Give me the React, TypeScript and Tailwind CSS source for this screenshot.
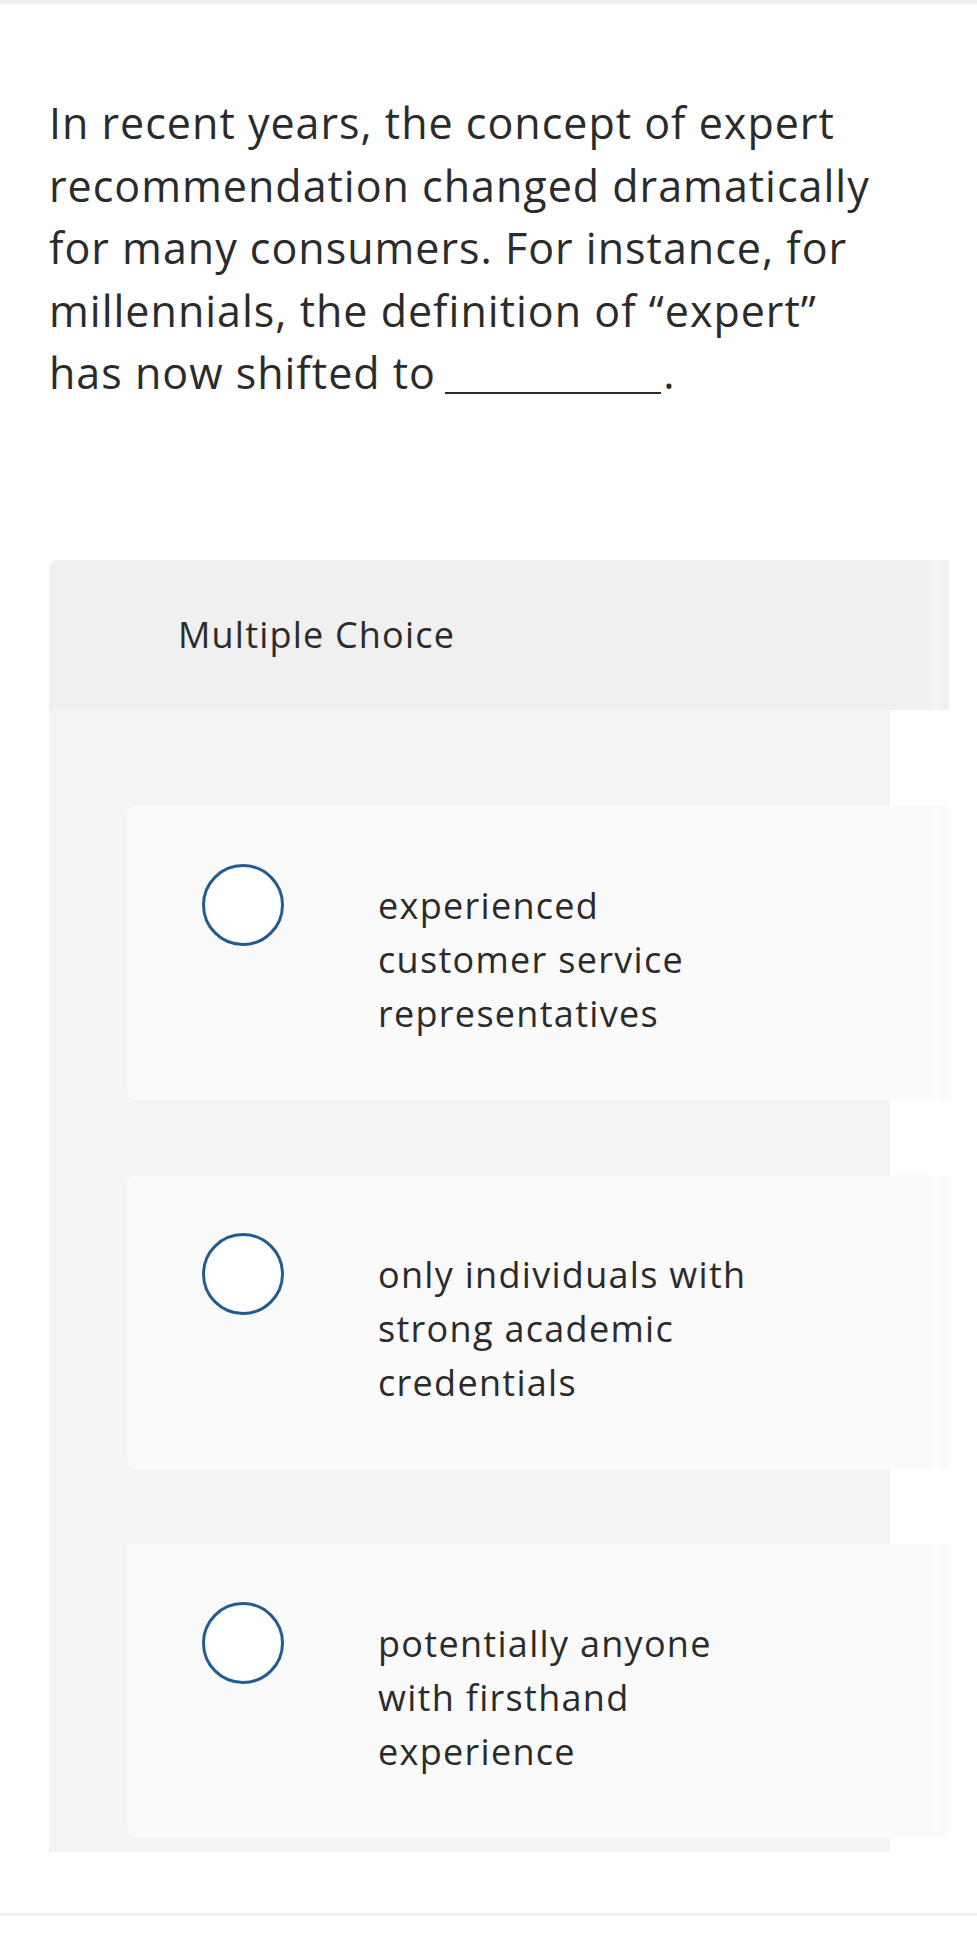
const options = [
  "experienced customer service representatives",
  "only individuals with strong academic credentials",
  "potentially anyone with firsthand experience",
];

function OptionCard({ label }: { label: string }) {
  return (
    <div className="ml-[78px] flex h-[294px] w-[822px] shrink-0 rounded-l-[8px] bg-[#fafafa] pl-[75px] pt-[58px] shadow-[inset_-9px_0_0_#fafafa,inset_-17px_0_0_#fcfcfc]">
      <span className="h-[82px] w-[82px] shrink-0 rounded-full border-[3px] border-[#215b93] bg-white" />
      <p className="ml-[94px] mt-[15px] w-[388px] text-[36px] leading-[54px] tracking-[1.3px]">
        {label}
      </p>
    </div>
  );
}

export default function App() {
  return (
    <div className="min-h-[1933px] bg-white font-['Open_Sans','Liberation_Sans',sans-serif] text-[#2b2b2b]">
      <div className="h-[4px] bg-[#f0f0f0]" />

      <div className="pl-[49px] pt-[88px]">
        <p className="w-[841px] text-[43px] leading-[62.5px] tracking-[1px]">
          In recent years, the concept of expert recommendation changed dramatically for many
          consumers. For instance, for millennials, the definition of “expert” has now shifted to{" "}
          <span className="-ml-[3px] mr-[2px] inline-block h-0 w-[216px] border-b-2 border-[#2b2b2b] align-[-5px]" />.
        </p>

        <section className="mt-[155.5px] w-[841px]">
          <div className="flex h-[150px] w-[900px] items-center rounded-tl-[8px] bg-[#f0f0f0] pl-[129px] shadow-[inset_-9px_0_0_#f0f0f0,inset_-17px_0_0_#f5f5f5]">
            <h2 className="text-[36px] leading-none tracking-[1.2px]">Multiple Choice</h2>
          </div>

          <div className="flex flex-col gap-[75px] bg-[#f4f4f4] pb-[14px] pt-[96px]">
            {options.map((o) => (
              <OptionCard key={o} label={o} />
            ))}
          </div>
        </section>
      </div>

      <div className="mt-[61px] h-[3px] bg-[#f0f0f0]" />
    </div>
  );
}
